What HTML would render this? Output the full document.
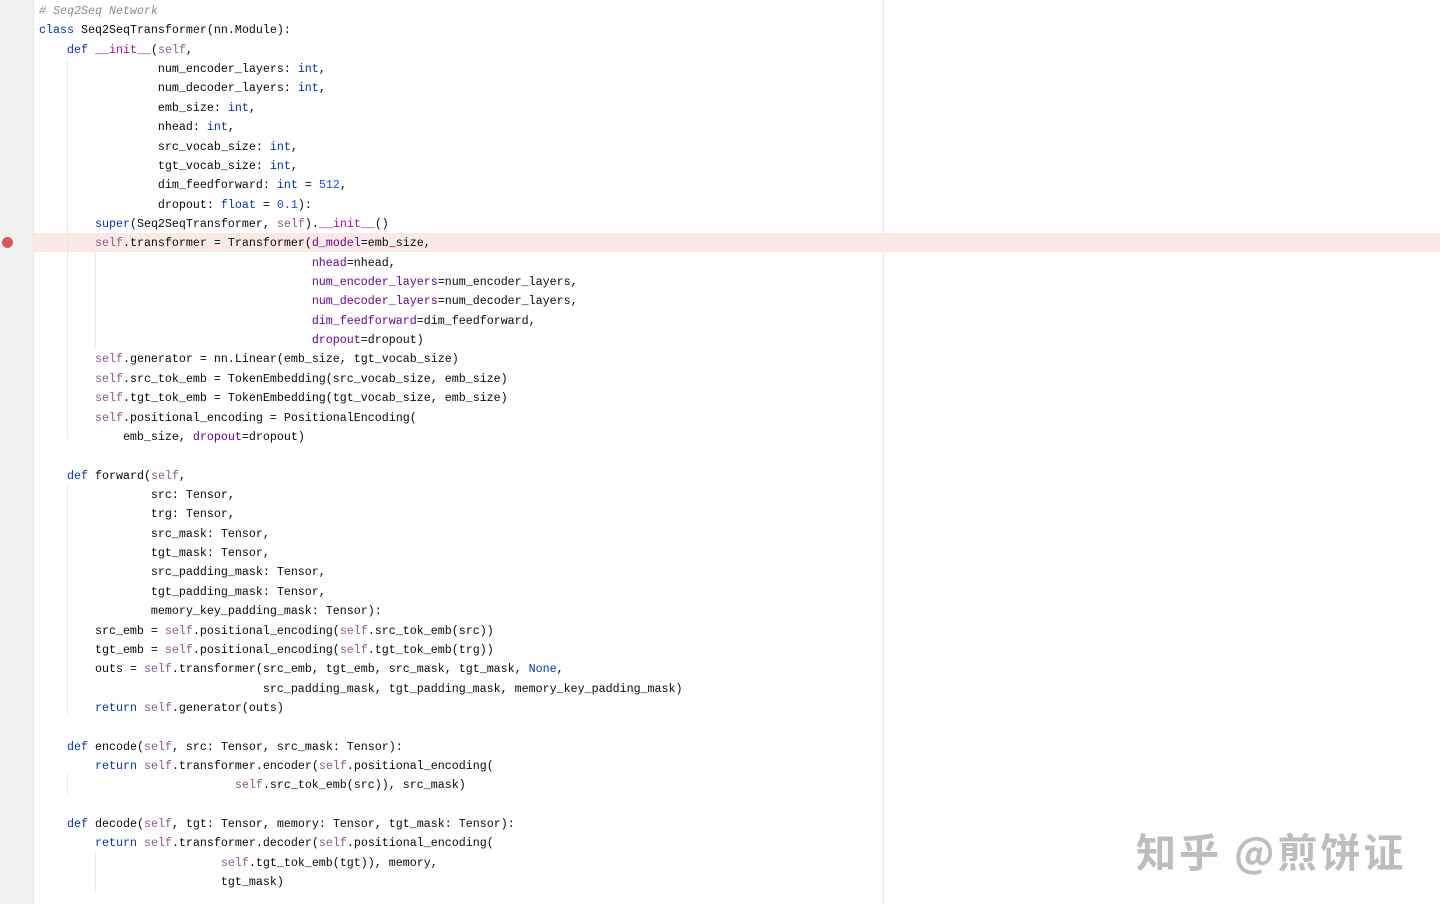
<!DOCTYPE html>
<html><head><meta charset="utf-8"><style>
body{margin:0;width:1440px;height:904px;background:#fff;position:relative;overflow:hidden}
#gut{position:absolute;left:0;top:0;width:33px;height:904px;background:#f2f2f2;border-right:1px solid #e4e4e4}
#mar{position:absolute;left:883px;top:0;width:1px;height:904px;background:#e6e6e6}
#hl{position:absolute;left:34px;top:233px;width:1406px;height:19.4px;background:#fbe9e7}
#bp{position:absolute;left:2px;top:237px;width:11px;height:11px;border-radius:50%;background:#db5860}
.g{position:absolute;width:1px;background:#e8e8e8}
#code{position:absolute;left:39px;top:2px;font-family:"Liberation Mono",monospace;font-size:11.67px;line-height:19.36px;color:#080808;white-space:pre}
.k{color:#0033b3}.s{color:#94558d}.n{color:#1750eb}.c{color:#8c8c8c;font-style:italic}.p{color:#660099}.d{color:#b200b2}
#wm{position:absolute;left:1136px;top:821px;font-family:"Noto Sans CJK SC",sans-serif;font-size:40px;font-weight:bold;color:#bdbdbd;letter-spacing:3px;white-space:nowrap}
</style></head><body>
<div id="gut"></div><div id="mar"></div><div id="hl"></div><div id="bp"></div>
<div class="g" style="left:67px;top:59px;height:380px"></div>
<div class="g" style="left:95px;top:252px;height:97px"></div>
<div class="g" style="left:67px;top:484px;height:230px"></div>
<div class="g" style="left:67px;top:774px;height:20px"></div>
<div class="g" style="left:95px;top:852px;height:40px"></div>
<div id="code"><span class="c"># Seq2Seq Network</span>
<span class="k">class</span> Seq2SeqTransformer(nn.Module):
    <span class="k">def</span> <span class="d">__init__</span>(<span class="s">self</span>,
                 num_encoder_layers: <span class="k">int</span>,
                 num_decoder_layers: <span class="k">int</span>,
                 emb_size: <span class="k">int</span>,
                 nhead: <span class="k">int</span>,
                 src_vocab_size: <span class="k">int</span>,
                 tgt_vocab_size: <span class="k">int</span>,
                 dim_feedforward: <span class="k">int</span> = <span class="n">512</span>,
                 dropout: <span class="k">float</span> = <span class="n">0.1</span>):
        <span class="k">super</span>(Seq2SeqTransformer, <span class="s">self</span>).<span class="d">__init__</span>()
        <span class="s">self</span>.transformer = Transformer(<span class="p">d_model</span>=emb_size,
                                       <span class="p">nhead</span>=nhead,
                                       <span class="p">num_encoder_layers</span>=num_encoder_layers,
                                       <span class="p">num_decoder_layers</span>=num_decoder_layers,
                                       <span class="p">dim_feedforward</span>=dim_feedforward,
                                       <span class="p">dropout</span>=dropout)
        <span class="s">self</span>.generator = nn.Linear(emb_size, tgt_vocab_size)
        <span class="s">self</span>.src_tok_emb = TokenEmbedding(src_vocab_size, emb_size)
        <span class="s">self</span>.tgt_tok_emb = TokenEmbedding(tgt_vocab_size, emb_size)
        <span class="s">self</span>.positional_encoding = PositionalEncoding(
            emb_size, <span class="p">dropout</span>=dropout)

    <span class="k">def</span> forward(<span class="s">self</span>,
                src: Tensor,
                trg: Tensor,
                src_mask: Tensor,
                tgt_mask: Tensor,
                src_padding_mask: Tensor,
                tgt_padding_mask: Tensor,
                memory_key_padding_mask: Tensor):
        src_emb = <span class="s">self</span>.positional_encoding(<span class="s">self</span>.src_tok_emb(src))
        tgt_emb = <span class="s">self</span>.positional_encoding(<span class="s">self</span>.tgt_tok_emb(trg))
        outs = <span class="s">self</span>.transformer(src_emb, tgt_emb, src_mask, tgt_mask, <span class="k">None</span>,
                                src_padding_mask, tgt_padding_mask, memory_key_padding_mask)
        <span class="k">return</span> <span class="s">self</span>.generator(outs)

    <span class="k">def</span> encode(<span class="s">self</span>, src: Tensor, src_mask: Tensor):
        <span class="k">return</span> <span class="s">self</span>.transformer.encoder(<span class="s">self</span>.positional_encoding(
                            <span class="s">self</span>.src_tok_emb(src)), src_mask)

    <span class="k">def</span> decode(<span class="s">self</span>, tgt: Tensor, memory: Tensor, tgt_mask: Tensor):
        <span class="k">return</span> <span class="s">self</span>.transformer.decoder(<span class="s">self</span>.positional_encoding(
                          <span class="s">self</span>.tgt_tok_emb(tgt)), memory,
                          tgt_mask)</div>
<div id="wm">知乎 @煎饼证</div>
</body></html>
